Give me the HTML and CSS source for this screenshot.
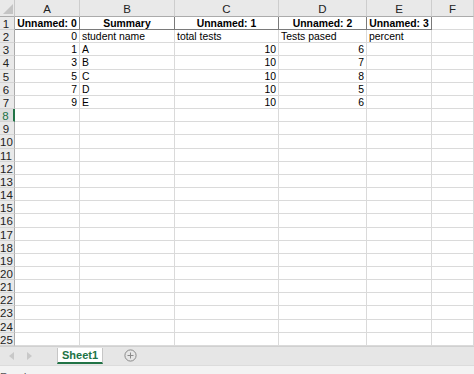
FILE: index.html
```html
<!DOCTYPE html>
<html>
<head>
<meta charset="utf-8">
<link rel="stylesheet" href="styles.css">
</head>
<body>
<div class="app">
  <div class="sheet">
    <div class="corner"><svg class="tri" width="10" height="10" viewBox="0 0 10 10"><polygon points="10,0 10,10 0,10" fill="#c4c4c4"/></svg></div>
    <div class="ch">A</div><div class="ch">B</div><div class="ch">C</div><div class="ch">D</div><div class="ch">E</div><div class="ch">F</div>

    <div class="rh">1</div><div class="c h">Unnamed: 0</div><div class="c h">Summary</div><div class="c h">Unnamed: 1</div><div class="c h">Unnamed: 2</div><div class="c h">Unnamed: 3</div><div class="c"></div>
    <div class="rh">2</div><div class="c n">0</div><div class="c">student name</div><div class="c">total tests</div><div class="c">Tests pased</div><div class="c">percent</div><div class="c"></div>
    <div class="rh">3</div><div class="c n">1</div><div class="c">A</div><div class="c n">10</div><div class="c n">6</div><div class="c"></div><div class="c"></div>
    <div class="rh">4</div><div class="c n">3</div><div class="c">B</div><div class="c n">10</div><div class="c n">7</div><div class="c"></div><div class="c"></div>
    <div class="rh">5</div><div class="c n">5</div><div class="c">C</div><div class="c n">10</div><div class="c n">8</div><div class="c"></div><div class="c"></div>
    <div class="rh">6</div><div class="c n">7</div><div class="c">D</div><div class="c n">10</div><div class="c n">5</div><div class="c"></div><div class="c"></div>
    <div class="rh">7</div><div class="c n">9</div><div class="c">E</div><div class="c n">10</div><div class="c n">6</div><div class="c"></div><div class="c"></div>
    <div class="rh sel">8</div><div class="c"></div><div class="c"></div><div class="c"></div><div class="c"></div><div class="c"></div><div class="c"></div>
    <div class="rh">9</div><div class="c"></div><div class="c"></div><div class="c"></div><div class="c"></div><div class="c"></div><div class="c"></div>
    <div class="rh">10</div><div class="c"></div><div class="c"></div><div class="c"></div><div class="c"></div><div class="c"></div><div class="c"></div>
    <div class="rh">11</div><div class="c"></div><div class="c"></div><div class="c"></div><div class="c"></div><div class="c"></div><div class="c"></div>
    <div class="rh">12</div><div class="c"></div><div class="c"></div><div class="c"></div><div class="c"></div><div class="c"></div><div class="c"></div>
    <div class="rh">13</div><div class="c"></div><div class="c"></div><div class="c"></div><div class="c"></div><div class="c"></div><div class="c"></div>
    <div class="rh">14</div><div class="c"></div><div class="c"></div><div class="c"></div><div class="c"></div><div class="c"></div><div class="c"></div>
    <div class="rh">15</div><div class="c"></div><div class="c"></div><div class="c"></div><div class="c"></div><div class="c"></div><div class="c"></div>
    <div class="rh">16</div><div class="c"></div><div class="c"></div><div class="c"></div><div class="c"></div><div class="c"></div><div class="c"></div>
    <div class="rh">17</div><div class="c"></div><div class="c"></div><div class="c"></div><div class="c"></div><div class="c"></div><div class="c"></div>
    <div class="rh">18</div><div class="c"></div><div class="c"></div><div class="c"></div><div class="c"></div><div class="c"></div><div class="c"></div>
    <div class="rh">19</div><div class="c"></div><div class="c"></div><div class="c"></div><div class="c"></div><div class="c"></div><div class="c"></div>
    <div class="rh">20</div><div class="c"></div><div class="c"></div><div class="c"></div><div class="c"></div><div class="c"></div><div class="c"></div>
    <div class="rh">21</div><div class="c"></div><div class="c"></div><div class="c"></div><div class="c"></div><div class="c"></div><div class="c"></div>
    <div class="rh">22</div><div class="c"></div><div class="c"></div><div class="c"></div><div class="c"></div><div class="c"></div><div class="c"></div>
    <div class="rh">23</div><div class="c"></div><div class="c"></div><div class="c"></div><div class="c"></div><div class="c"></div><div class="c"></div>
    <div class="rh">24</div><div class="c"></div><div class="c"></div><div class="c"></div><div class="c"></div><div class="c"></div><div class="c"></div>
    <div class="rh">25</div><div class="c"></div><div class="c"></div><div class="c"></div><div class="c"></div><div class="c"></div><div class="c"></div>
  </div>
  <div class="tabbar">
    <div class="nav">
      <svg width="6" height="8" viewBox="0 0 6 8"><polygon points="5,0 5,8 0,4" fill="#c8c8c8"/></svg>
      <svg width="6" height="8" viewBox="0 0 6 8"><polygon points="1,0 1,8 6,4" fill="#c8c8c8"/></svg>
    </div>
    <div class="tab">Sheet1</div>
    <div class="add"><svg width="13" height="13" viewBox="0 0 13 13"><circle cx="6.5" cy="6.5" r="5.6" fill="none" stroke="#8a8a8a" stroke-width="1"/><path d="M6.5 3.5v6M3.5 6.5h6" stroke="#8a8a8a" stroke-width="1"/></svg></div>
  </div>
  <div class="status">Ready</div>
</div>
</body>
</html>
```
FILE: styles.css
```css
html, body {
  margin: 0;
  padding: 0;
  overflow: hidden;
  background: #ffffff;
  font-family: "Liberation Sans", Arial, sans-serif;
}

.app {
  width: 474px;
  height: 374px;
  display: flex;
  flex-direction: column;
  overflow: hidden;
}

.sheet {
  display: grid;
  grid-template-columns: 15px 65px 95px 104px 88px 65px 42px;
  grid-template-rows: 17px repeat(25, 13.16px);
  flex: none;
}

.corner {
  background: #e9e9e9;
  border-right: 1px solid #c8c8c8;
  border-bottom: 1px solid #ababab;
  box-sizing: border-box;
  display: flex;
  align-items: flex-end;
  justify-content: flex-end;
  padding: 0 1px 2px 0;
}

.tri {
  display: block;
}

.ch {
  box-sizing: border-box;
  background: #e9e9e9;
  border-right: 1px solid #cdcdcd;
  border-bottom: 1px solid #ababab;
  font-size: 11.5px;
  line-height: 14px;
  padding-top: 2px;
  text-align: center;
  color: #222222;
}

.rh {
  box-sizing: border-box;
  background: #e9e9e9;
  border-right: 1px solid #ababab;
  border-bottom: 1px solid #d4d4d4;
  font-size: 11.5px;
  line-height: 12px;
  padding: 1px 2px 0 0;
  text-align: center;
  color: #222222;
  white-space: nowrap;
}

.rh.sel {
  color: #217346;
  background: #dedede;
  border-right: 2px solid #217346;
}

.c {
  box-sizing: border-box;
  border-right: 1px solid #dadada;
  border-bottom: 1px solid #dadada;
  font-size: 10.4px;
  line-height: 12px;
  padding: 1px 2px 0 2px;
  white-space: nowrap;
  color: #000000;
}

.c.h {
  font-weight: bold;
  text-align: center;
  border-right-color: #7a7a7a;
  border-bottom-color: #7a7a7a;
}

.c.n {
  text-align: right;
}

.tabbar {
  flex: none;
  height: 19px;
  background: #e6e6e6;
  border-top: 1px solid #d0d0d0;
  box-sizing: border-box;
  display: flex;
  align-items: flex-start;
}

.nav {
  width: 57px;
  display: flex;
  gap: 11px;
  padding: 5px 0 0 9px;
  box-sizing: border-box;
}

.nav svg {
  display: block;
}

.tab {
  width: 46px;
  height: 16px;
  box-sizing: border-box;
  margin-top: 1px;
  background: #ffffff;
  border-left: 1px solid #c6c6c6;
  border-right: 1px solid #c6c6c6;
  border-bottom: 2px solid #217346;
  color: #217346;
  font-weight: bold;
  font-size: 11px;
  line-height: 14px;
  text-align: center;
}

.add {
  margin-left: 21px;
  padding-top: 2px;
}

.add svg {
  display: block;
}

.status {
  flex: 1;
  background: #f3f3f3;
  border-top: 1px solid #dcdcdc;
  font-size: 11px;
  color: #555555;
  padding: 5px 0 0 0;
  line-height: 12px;
}
```
